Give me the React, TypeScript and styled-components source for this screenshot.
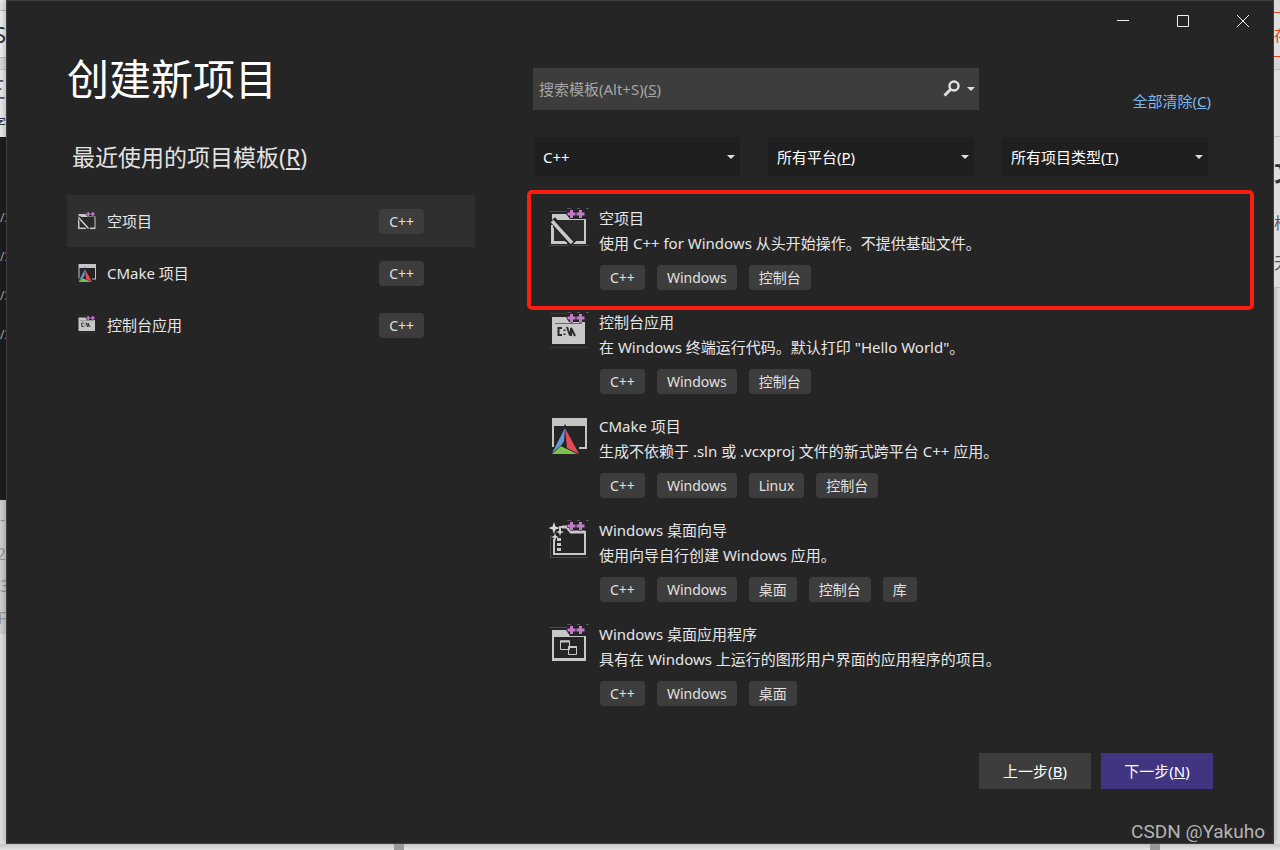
import React from "react";
import styled, { createGlobalStyle } from "styled-components";

const GlobalStyle = createGlobalStyle`
  * { box-sizing: border-box; }
  body {
    margin: 0;
    background: #e4e4e4;
    font-family: "Noto Sans", "Noto Sans CJK SC", sans-serif;
    font-size: 15px;
    line-height: 20px;
    color: #e6e6e6;
  }
  button, input, select { font: inherit; }
`;

/* ---------- page behind the dialog ---------- */

const Desktop = styled.div`
  display: grid;
  grid-template-columns: 6px minmax(0, 1fr) 6px;
  grid-template-rows: minmax(0, 1fr) 6px;
  min-height: 100vh;
`;

const Strip = styled.div`
  display: flex;
  flex-direction: column;
  overflow: hidden;
  min-width: 0;
`;

const Slice = styled.div<{ $h: number; $bg: string; $line?: string; $ink?: string; $size?: number; $right?: boolean; $bold?: boolean }>`
  flex: none;
  display: flex;
  align-items: center;
  justify-content: ${(p) => (p.$right ? "flex-end" : "flex-start")};
  height: ${(p) => p.$h}px;
  background: ${(p) => p.$bg};
  border-bottom: ${(p) => (p.$line ? `1px solid ${p.$line}` : "none")};
  color: ${(p) => p.$ink || "#333"};
  font-size: ${(p) => p.$size || 16}px;
  font-weight: ${(p) => (p.$bold ? 700 : 400)};
  white-space: nowrap;
  overflow: hidden;
`;

const BottomStrip = styled.div`
  grid-column: 1 / -1;
  display: flex;
  justify-content: space-between;
  padding: 0 120px 0 394px;
  background: linear-gradient(#c4c4c4, #e6e6e6);
`;

const Thumb = styled.span`
  width: 10px;
  background: #999999;
`;

/* ---------- dialog ---------- */

const Dialog = styled.main`
  display: flex;
  flex-direction: column;
  background: #252526;
  border: 1px solid #3f3f42;
  box-shadow: 0 0 8px rgba(0, 0, 0, 0.35);
`;

const TitleBar = styled.div`
  display: flex;
  justify-content: flex-end;
  height: 40px;
`;

const CaptionButton = styled.button`
  display: grid;
  place-items: center;
  width: 60px;
  padding: 0;
  border: 0;
  background: none;
  color: #f1f1f1;
`;

const Columns = styled.div`
  display: grid;
  grid-template-columns: 408px minmax(0, 1fr);
  gap: 58px;
  flex: 1;
  padding: 0 19px 0 60px;
`;

const Title = styled.h1`
  margin: 8px 0 0;
  font-size: 42px;
  line-height: 60px;
  font-weight: 400;
  color: #ffffff;
`;

const Heading = styled.h2`
  margin: 32px 0 22px 5px;
  font-size: 23px;
  line-height: 32px;
  font-weight: 400;
  color: #e2e2e2;
`;

const List = styled.ul`
  margin: 0;
  padding: 0;
  list-style: none;
`;

const RecentRow = styled.li<{ $selected?: boolean }>`
  display: flex;
  align-items: center;
  height: 52px;
  padding: 0 51px 0 10px;
  background: ${(p) => (p.$selected ? "#2f2f30" : "transparent")};
`;

const RecentName = styled.span`
  flex: 1;
  margin-left: 10px;
`;

const Tag = styled.span`
  height: 25px;
  padding: 0 10px;
  border-radius: 4px;
  background: #3d3d3d;
  font-size: 14px;
  line-height: 26px;
  color: #e0e0e0;
`;

const Right = styled.section`
  min-width: 0;
  padding-top: 27px;
`;

const SearchRow = styled.div`
  display: flex;
  justify-content: space-between;
  padding-right: 43px;
`;

const SearchBox = styled.div`
  position: relative;
  display: flex;
  align-items: center;
  width: 446px;
  height: 42px;
  background: #3d3d3d;
`;

const SearchInput = styled.input`
  flex: 1;
  align-self: stretch;
  min-width: 0;
  padding: 0 6px;
  border: 0;
  outline: 0;
  background: none;
  color: #f1f1f1;
  &:not(:placeholder-shown) + label { display: none; }
`;

const SearchLabel = styled.label`
  position: absolute;
  left: 6px;
  color: #a6a6a6;
  pointer-events: none;
`;

const SearchButton = styled.button`
  display: flex;
  align-items: center;
  gap: 6px;
  padding: 0 4px 0 0;
  border: 0;
  background: none;
  color: #e0e0e0;
`;

const ClearLink = styled.a`
  margin-top: 23px;
  color: #7ab8ee;
  text-decoration: none;
`;

const Filters = styled.div`
  display: flex;
  gap: 28px;
  margin-top: 26px;
  padding-left: 1px;
`;

const FilterBox = styled.div`
  position: relative;
  display: flex;
  align-items: center;
  width: 206px;
  height: 39px;
  background: #1f1f20;
  color: #ffffff;
`;

const FilterSelect = styled.select`
  appearance: none;
  width: 100%;
  height: 100%;
  padding: 0 9px;
  border: 0;
  background: none;
  color: transparent;
`;

const FilterLabel = styled.label`
  position: absolute;
  left: 9px;
  pointer-events: none;
`;

const FilterArrow = styled.span`
  position: absolute;
  right: 5px;
  display: flex;
  pointer-events: none;
`;

const Templates = styled(List)`
  margin-top: 14px;
  margin-left: -6px;
`;

const Template = styled.li<{ $marked?: boolean }>`
  display: grid;
  grid-template-columns: 40px minmax(0, 1fr);
  gap: 10px;
  height: 104px;
  padding: 18px 0 0 22px;
  position: relative;
  &::after {
    content: "";
    display: ${(p) => (p.$marked ? "block" : "none")};
    position: absolute;
    inset: 0 0 -16px;
    border: 4px solid #fb1e10;
    border-radius: 5px;
  }
`;

const TemplateName = styled.h3`
  margin: 0;
  font-size: 15px;
  line-height: 20px;
  font-weight: 400;
`;

const Description = styled.p`
  margin: 5px 0 12px;
  line-height: 20px;
  white-space: nowrap;
`;

const Tags = styled.div`
  display: flex;
  gap: 12px;
  padding-left: 1px;
`;

const Footer = styled.footer`
  display: flex;
  justify-content: flex-end;
  gap: 10px;
  padding: 0 60px 54px 0;
`;

const ActionButton = styled.button<{ $primary?: boolean }>`
  width: 112px;
  height: 36px;
  padding: 0;
  border: 0;
  background: ${(p) => (p.$primary ? "#413582" : "#3d3d3d")};
  color: #ffffff;
`;

const Watermark = styled.div`
  position: absolute;
  right: 15px;
  bottom: 6px;
  font-family: Roboto, sans-serif;
  font-size: 19px;
  line-height: 24px;
  color: #b4b4b4;
`;

/* ---------- icons ---------- */

const Arrow = () => (
  <svg width="8" height="4" viewBox="0 0 8 4" aria-hidden="true">
    <path d="M0 0H8L4 4Z" fill="#e0e0e0" />
  </svg>
);

const PlusPlus = () => (
  <path
    d="M21 2h3v2.500h2.500v3H24V10h-3V7.500h-2.500v-3H21ZM30 2h3v2.500h2.500v3H33V10h-3V7.500h-2.500v-3H30Z"
    fill="#c27ac8"
    stroke="#252526"
    strokeWidth="1"
    paintOrder="stroke"
  />
);

type IconKind = "empty" | "console" | "cmake" | "wizard" | "desktop";

const TemplateIcon = ({ kind, size }: { kind: IconKind; size: number }) => (
  <svg width={size} height={size} viewBox="0 0 40 40" aria-hidden="true">
    {kind === "empty" && (
      <>
        <path d="M0 3.500H18M0 37.500H40" stroke="#4a4a4a" />
        <path d="M3 6H17L21 11H37V36H3Z" fill="#c8c8c8" />
        <path d="M5 12H35V33H5Z" fill="#2a2a2b" />
        <path d="M3 12L24 36" stroke="#252526" strokeWidth="8" />
        <path d="M3 13L23 35" stroke="#c8c8c8" strokeWidth="3.500" />
        <path d="M3 17V35H18" fill="none" stroke="#c8c8c8" strokeWidth="2" />
      </>
    )}
    {kind === "console" && (
      <>
        <path d="M1 1.500H18M1 35.500H38" stroke="#3c3c3c" />
        <path d="M3 5H17L20 10H36V32H3Z" fill="#c8c8c8" />
        <path d="M6 11.500H33" stroke="#68686a" />
        <path d="M13 16H9.500V23H13M15.500 17.500V19M15.500 21.500V23M18 15L21 23.500M22 24V16L26 24" fill="none" stroke="#2a2a2b" strokeWidth="2" />
      </>
    )}
    {kind === "cmake" && (
      <>
        <path d="M3 2H38V33H30V31H36V10H5V31H3Z" fill="#c4c4c4" />
        <path d="M16 8L33 39H1Z" fill="#252526" />
        <path d="M16 12L15 27L3 37Z" fill="#6496d2" />
        <path d="M16 12L30 38L18 32Z" fill="#e44a54" />
        <path d="M3 38L12 30L28 38Z" fill="#7ec050" />
        <path d="M15 25L12 30L18 33Z" fill="#252526" />
      </>
    )}
    {kind === "wizard" && (
      <>
        <path d="M1.500 15V37.500H39" fill="none" stroke="#4a4a4a" />
        <path d="M11 13V7H18L22 12H36V34H5V19" fill="none" stroke="#c8c8c8" strokeWidth="2" />
        <path d="M13 7H18L22 12H36" fill="none" stroke="#c8c8c8" strokeWidth="3" />
        <path d="M10 18V31" stroke="#c8c8c8" strokeWidth="4" strokeDasharray="3 2" />
        <path d="M5 2L6.500 6.500L11 8L6.500 9.500L5 14L3.500 9.500L-1 8L3.500 6.500ZM11 8L12 11L15 12L12 13L11 16L10 13L7 12L10 11ZM6 13L7 16L10 17L7 18L6 21L5 18L2 17L5 16Z" fill="#d8d8d8" />
      </>
    )}
    {kind === "desktop" && (
      <>
        <path d="M0 3.500H18" stroke="#4a4a4a" />
        <path d="M3 6H17L21 12H37V37H3Z" fill="#c8c8c8" />
        <path d="M5 13H35V34H5Z" fill="#252526" />
        <path d="M11.500 17V25.500H20.500V17ZM19.500 23V30.500H27.500V23Z" fill="#252526" stroke="#c8c8c8" />
        <path d="M11 17.500H21M19 23H28" stroke="#c8c8c8" strokeWidth="2" />
      </>
    )}
    {kind !== "cmake" && (
      <>
        <path d="M18.500 1V.5H22M28 .5H31M37 .5H40" stroke="#555" fill="none" />
        <PlusPlus />
      </>
    )}
  </svg>
);

/* ---------- data ---------- */

const recent: { name: string; icon: IconKind }[] = [
  { name: "空项目", icon: "empty" },
  { name: "CMake 项目", icon: "cmake" },
  { name: "控制台应用", icon: "console" },
];

const templates: { name: string; icon: IconKind; text: string; tags: string[] }[] = [
  { name: "空项目", icon: "empty", text: "使用 C++ for Windows 从头开始操作。不提供基础文件。", tags: ["C++", "Windows", "控制台"] },
  { name: "控制台应用", icon: "console", text: "在 Windows 终端运行代码。默认打印 \"Hello World\"。", tags: ["C++", "Windows", "控制台"] },
  { name: "CMake 项目", icon: "cmake", text: "生成不依赖于 .sln 或 .vcxproj 文件的新式跨平台 C++ 应用。", tags: ["C++", "Windows", "Linux", "控制台"] },
  { name: "Windows 桌面向导", icon: "wizard", text: "使用向导自行创建 Windows 应用。", tags: ["C++", "Windows", "桌面", "控制台", "库"] },
  { name: "Windows 桌面应用程序", icon: "desktop", text: "具有在 Windows 上运行的图形用户界面的应用程序的项目。", tags: ["C++", "Windows", "桌面"] },
];

const filters: { id: string; text: string; hotkey?: string }[] = [
  { id: "language", text: "C++" },
  { id: "platform", text: "所有平台", hotkey: "P" },
  { id: "type", text: "所有项目类型", hotkey: "T" },
];

const Hotkey = ({ k }: { k: string }) => (
  <>
    (<u>{k}</u>)
  </>
);

export default function App() {
  return (
    <>
      <GlobalStyle />
      <Desktop>
        <Strip aria-hidden="true">
          <Slice $h={11} $bg="#e6e6e6" $line="#bdbdbd" />
          <Slice $h={47} $bg="#f0f0f0" $line="#bdbdbd" $size={22} $right>S</Slice>
          <Slice $h={12} $bg="#dcdcdc" $line="#c8c8c8" />
          <Slice $h={38} $bg="#ececec" $size={24} $ink="#555566" $right>三</Slice>
          <Slice $h={29} $bg="#ececec" $size={14} $right>字</Slice>
          <Slice $h={61} $bg="#1e1e1e" />
          {[0, 1, 2, 3].map((n) => (
            <Slice key={n} $h={39} $bg="#1e1e1e" $ink="#b0b0b0" $size={12}>/3</Slice>
          ))}
          <Slice $h={146} $bg="#1e1e1e" />
          <Slice $h={38} $bg="#d2d2d2" $ink="#999999">-</Slice>
          <Slice $h={32} $bg="#d2d2d2" $ink="#999999" $right>2</Slice>
          <Slice $h={32} $bg="#d2d2d2" $ink="#999999">3</Slice>
          <Slice $h={32} $bg="#d2d2d2" $ink="#999999" $right>F</Slice>
        </Strip>
        <Dialog>
          <TitleBar>
            <CaptionButton aria-label="最小化">
              <svg width="14" height="14" viewBox="0 0 14 14"><path d="M1 6.500H13" stroke="currentColor" /></svg>
            </CaptionButton>
            <CaptionButton aria-label="最大化">
              <svg width="14" height="14" viewBox="0 0 14 14"><path d="M1.500 1.500H12.500V12.500H1.500Z" fill="none" stroke="currentColor" /></svg>
            </CaptionButton>
            <CaptionButton aria-label="关闭">
              <svg width="14" height="14" viewBox="0 0 14 14"><path d="M1 1L13 13M13 1L1 13" stroke="currentColor" /></svg>
            </CaptionButton>
          </TitleBar>
          <Columns>
            <section>
              <Title>创建新项目</Title>
              <Heading>最近使用的项目模板<Hotkey k="R" /></Heading>
              <List>
                {recent.map((r, i) => (
                  <RecentRow key={r.name} $selected={i === 0}>
                    <TemplateIcon kind={r.icon} size={20} />
                    <RecentName>{r.name}</RecentName>
                    <Tag>C++</Tag>
                  </RecentRow>
                ))}
              </List>
            </section>
            <Right>
              <SearchRow>
                <SearchBox>
                  <SearchInput id="search" placeholder=" " />
                  <SearchLabel htmlFor="search">搜索模板(Alt+S)<Hotkey k="S" /></SearchLabel>
                  <SearchButton aria-label="搜索">
                    <svg width="18" height="18" viewBox="0 0 18 18">
                      <circle cx="11" cy="6" r="4.500" fill="none" stroke="currentColor" strokeWidth="2.500" />
                      <path d="M8 9L1.500 15.500" stroke="currentColor" strokeWidth="3" />
                    </svg>
                    <Arrow />
                  </SearchButton>
                </SearchBox>
                <ClearLink href="#clear">全部清除<Hotkey k="C" /></ClearLink>
              </SearchRow>
              <Filters>
                {filters.map((f) => (
                  <FilterBox key={f.id}>
                    <FilterSelect id={f.id}><option>{f.text}</option></FilterSelect>
                    <FilterLabel htmlFor={f.id}>{f.text}{f.hotkey && <Hotkey k={f.hotkey} />}</FilterLabel>
                    <FilterArrow><Arrow /></FilterArrow>
                  </FilterBox>
                ))}
              </Filters>
              <Templates>
                {templates.map((t, i) => (
                  <Template key={t.name} $marked={i === 0}>
                    <TemplateIcon kind={t.icon} size={40} />
                    <div>
                      <TemplateName>{t.name}</TemplateName>
                      <Description>{t.text}</Description>
                      <Tags>{t.tags.map((tag) => <Tag key={tag}>{tag}</Tag>)}</Tags>
                    </div>
                  </Template>
                ))}
              </Templates>
            </Right>
          </Columns>
          <Footer>
            <ActionButton>上一步<Hotkey k="B" /></ActionButton>
            <ActionButton $primary>下一步<Hotkey k="N" /></ActionButton>
          </Footer>
        </Dialog>
        <Strip aria-hidden="true">
          <Slice $h={13} $bg="#dadada" $line="#e8401c" />
          <Slice $h={44} $bg="#e0e0e0" $line="#e8401c" $ink="#e8401c" $size={15}>存</Slice>
          <Slice $h={13} $bg="#d6d6d6" $line="#bdbdbd" />
          <Slice $h={67} $bg="#dedede" $line="#bdbdbd" />
          <Slice $h={70} $bg="#dedede" $size={24} $bold>文</Slice>
          <Slice $h={31} $bg="#dedede" $ink="#555566">根</Slice>
          <Slice $h={50} $bg="#dedede" $line="#bdbdbd" $ink="#555566">无</Slice>
        </Strip>
        <BottomStrip aria-hidden="true"><Thumb /><Thumb /></BottomStrip>
      </Desktop>
      <Watermark>CSDN @Yakuho</Watermark>
    </>
  );
}
